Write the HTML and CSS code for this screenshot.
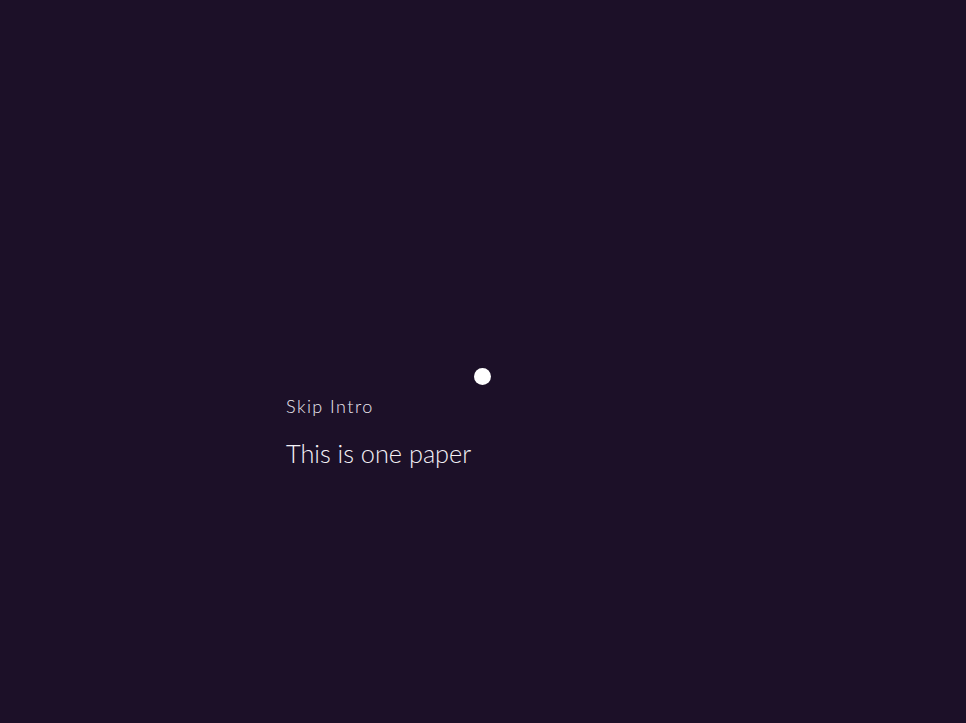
FILE: index.html
```html
<!DOCTYPE html>
<html>
<head>
<meta charset="utf-8">
<link rel="stylesheet" href="styles.css">
</head>
<body>
<main class="stage">
  <div class="intro">
    <div class="dot-row"><span class="dot"></span></div>
    <a class="skip" href="#">Skip Intro</a>
    <p class="caption">This is one paper</p>
  </div>
</main>
</body>
</html>
```

FILE: styles.css
```css
html, body {
  margin: 0;
  padding: 0;
  height: 100%;
  background: #1c1028;
}
.stage {
  height: 100%;
  font-family: Lato, "Open Sans", sans-serif;
  color: #eeeaf2;
}
.intro {
  padding-top: 368px;
  padding-left: 286px;
  display: flex;
  flex-direction: column;
  align-items: flex-start;
}
.dot-row {
  padding-left: 188px;
  height: 17px;
}
.dot {
  display: block;
  width: 17px;
  height: 17px;
  border-radius: 50%;
  background: #ffffff;
}
.skip {
  margin-top: 10px;
  font-size: 18px;
  font-weight: 300;
  letter-spacing: 1.45px;
  color: #ece8f0;
  text-decoration: none;
  line-height: 22px;
}
.caption {
  margin: 20px 0 0;
  font-size: 25.3px;
  font-weight: 300;
  line-height: 32px;
  color: #f4f1f7;
}
```
